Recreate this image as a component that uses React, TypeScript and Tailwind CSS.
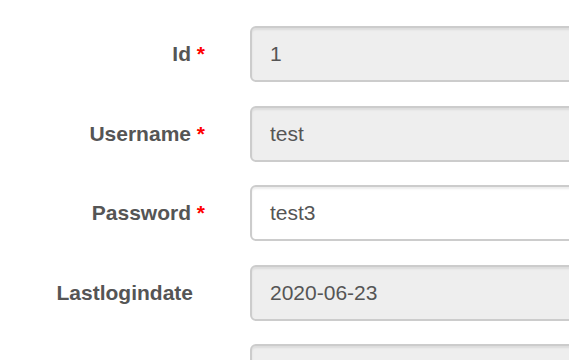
import React from "react";

const rows = [
  { label: "Id", value: "1", required: true, readOnly: true },
  { label: "Username", value: "test", required: true, readOnly: true },
  { label: "Password", value: "test3", required: true, readOnly: false },
  { label: "Lastlogindate", value: "2020-06-23", required: false, readOnly: true },
  { label: "", value: "", required: false, readOnly: true },
];

export default function App() {
  return (
    <div
      className="w-[569px] h-[360px] overflow-hidden bg-white"
      style={{ fontFamily: '"Liberation Sans", Arial, sans-serif' }}
    >
      <div className="flex flex-col gap-[23.5px] pt-[26px] w-[700px]">
        {rows.map((r, i) => (
          <div key={i} className="flex items-center h-[56px] shrink-0">
            <label
              className={`w-[205px] shrink-0 text-right text-[21px] font-bold text-[#555] whitespace-nowrap ${
                r.required ? "" : "pr-[12px]"
              }`}
            >
              {r.label}
              {r.required && <span className="text-[#f00]"> *</span>}
            </label>
            <div
              className={`ml-[45px] w-[400px] h-[56px] shrink-0 rounded-[6px] border-2 border-[#cccccc] shadow-[inset_0_2px_2px_rgba(0,0,0,0.075)] flex items-center pl-[18px] text-[21px] text-[#555] ${
                r.readOnly ? "bg-[#eeeeee]" : "bg-white"
              }`}
            >
              {r.value}
            </div>
          </div>
        ))}
      </div>
    </div>
  );
}
